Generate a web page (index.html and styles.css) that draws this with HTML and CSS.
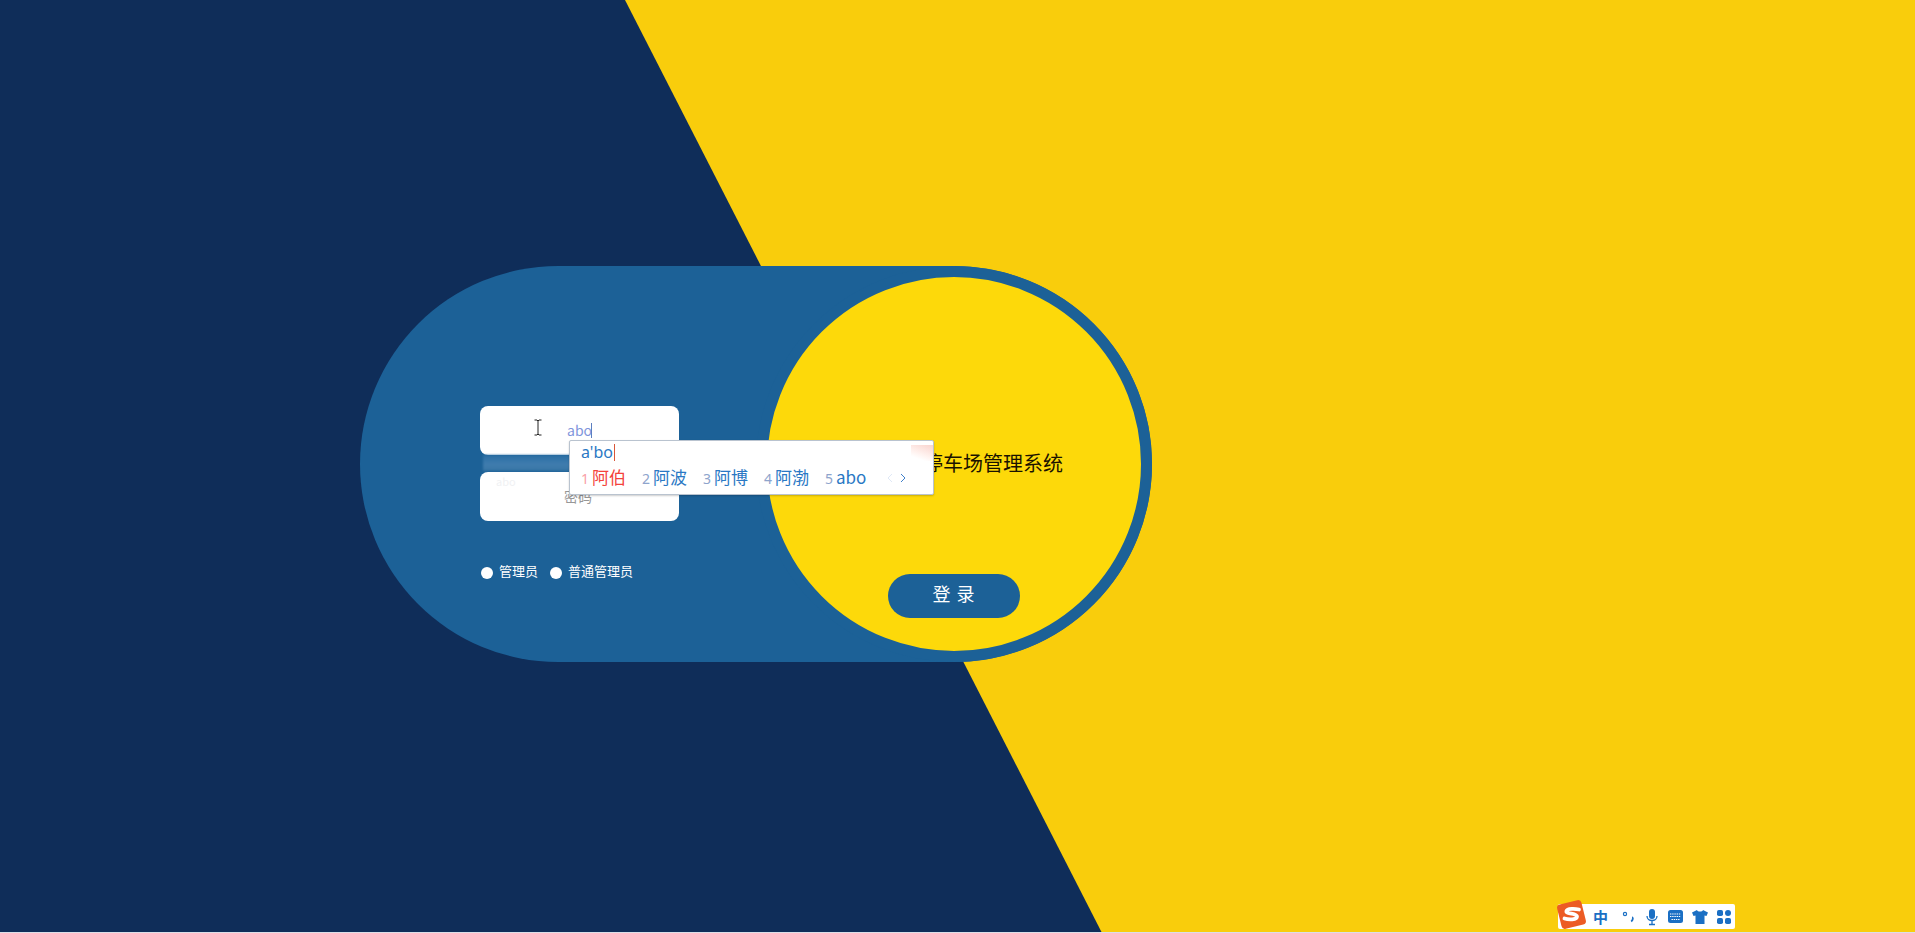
FILE: index.html
```html
<!DOCTYPE html>
<html lang="zh-CN">
<head>
<meta charset="utf-8">
<title>停车场管理系统</title>
<link rel="stylesheet" href="styles.css">
</head>
<body>
<div class="slant"></div>
<main class="page">
  <form class="card">
    <section class="fields">
      <div class="input"><span class="typed">abo<i class="input-caret"></i></span></div>
      <div class="smear"></div>
      <div class="input second"><span class="ghost">abo</span><span class="placeholder">密码</span></div>
      <div class="roles">
        <label class="role"><i class="radio"></i>管理员</label>
        <label class="role"><i class="radio"></i>普通管理员</label>
      </div>
    </section>
    <section class="circle">
      <h1 class="title">停车场管理系统</h1>
      <button class="login" type="button">登 录</button>
    </section>
  </form>
</main>

<svg class="cursor" width="10" height="17" viewBox="0 0 10 17" aria-hidden="true"><path d="M1.500 1h2.500l1 1 1-1h2.500M5 2v13M1.500 16h2.500l1-1 1 1h2.500" fill="none" stroke="#222" stroke-width="1"/></svg>

<div class="ime">
  <div class="ime-top">a'bo<i class="caret"></i></div>
  <div class="ime-list">
    <span class="cand first"><b>1</b>阿伯</span>
    <span class="cand"><b>2</b>阿波</span>
    <span class="cand"><b>3</b>阿博</span>
    <span class="cand"><b>4</b>阿渤</span>
    <span class="cand"><b>5</b>abo</span>
    <svg class="pager" width="22" height="12" viewBox="0 0 22 12" aria-hidden="true"><path d="M6 2 2 6l4 4" fill="none" stroke="#dfe8f6" stroke-width="1"/><path d="M15 2l4 4-4 4" fill="none" stroke="#3f7fca" stroke-width="1"/></svg>
  </div>
  <div class="ime-glare"></div>
</div>

<div class="toolbar">
  <svg class="logo" width="31" height="31" viewBox="0 0 31 31" aria-hidden="true">
    <rect x="3" y="3" width="25" height="25" rx="3.500" transform="rotate(-14 15.500 15.500)" fill="#ec5b24"/>
    <path d="M23 10.500c-4-1-11.500-1.300-12.500 1.500-1 3.200 10.500 2.200 10.500 5.500 0 3.500-8.500 3.300-12.500 2" fill="none" stroke="#fff" stroke-width="3.800" stroke-linecap="round"/>
  </svg>
  <span class="zh">中</span>
  <svg width="14" height="14" viewBox="0 0 14 14" aria-hidden="true"><circle cx="3" cy="4" r="1.600" fill="none" stroke="#1a6fc4" stroke-width="1.200"/><path d="M10 7.500c1.200 0 1.200 2.500-.8 4" fill="none" stroke="#1a6fc4" stroke-width="1.800"/></svg>
  <svg width="14" height="18" viewBox="0 0 14 18" aria-hidden="true"><rect x="4" y="1" width="6" height="10" rx="3" fill="#1a6fc4"/><path d="M2 8c0 6 10 6 10 0M7 13v3M4 16.500h6" fill="none" stroke="#1a6fc4" stroke-width="1.300"/></svg>
  <svg width="15" height="13" viewBox="0 0 15 13" aria-hidden="true"><rect width="15" height="13" rx="2.500" fill="#1a6fc4"/><path d="M2 4h11M2 6.500h11M3.500 9.500h8" stroke="#fff" stroke-width="1.100" stroke-dasharray="1.400 .8"/></svg>
  <svg width="16" height="14" viewBox="0 0 16 14" aria-hidden="true"><path d="M5 0 0 2.500l1.500 3.500L3.500 5.500V14h9V5.500l2 .5L16 2.500 11 0C10.500 2 5.500 2 5 0z" fill="#1a6fc4"/></svg>
  <svg width="14" height="14" viewBox="0 0 14 14" aria-hidden="true"><rect x="0" y="0" width="6" height="6" rx="1.800" fill="#1a6fc4"/><rect x="8" y="0" width="6" height="6" rx="3" fill="#1a6fc4"/><rect x="0" y="8" width="6" height="6" rx="1.800" fill="#1a6fc4"/><rect x="8" y="8" width="6" height="6" rx="1.800" fill="#1a6fc4"/></svg>
</div>
</body>
</html>
```
FILE: styles.css
```css
* { box-sizing: border-box; }
html, body { margin: 0; height: 100%; overflow: hidden; }
body {
  background: #0f2d59;
  font-family: "Noto Sans CJK SC", "Noto Sans", sans-serif;
  color: #111;
}
body::after {
  content: "";
  position: absolute;
  left: 0;
  right: 0;
  bottom: 0;
  height: 1px;
  background: #dcdfe8;
}
.slant {
  position: absolute;
  inset: 0;
  background: #f9cd0c;
  clip-path: polygon(625px 0, 100% 0, 100% 100%, 1102px 100%);
}
.page {
  position: relative;
  padding: 266px 0 0 360px;
}
.card {
  display: flex;
  justify-content: space-between;
  width: 792px;
  height: 396px;
  border-radius: 198px;
  background: #1c6197;
}
.fields {
  display: flex;
  flex-direction: column;
  width: 199px;
  margin: 140px 0 0 120px;
}
.input {
  position: relative;
  display: block;
  height: 49px;
  border-radius: 8px;
  background: #fff;
  font-size: 14px;
}
.typed {
  display: flex;
  align-items: center;
  padding-left: 87px;
  color: #7f96dc;
  font-size: 14px;
  line-height: 48px;
}
.input-caret {
  display: block;
  width: 1px;
  height: 15px;
  margin-left: -1px;
  background: #5d7fc0;
}
.smear {
  width: 88px;
  height: 17px;
  margin-left: 3px;
  background: linear-gradient(180deg, #2a6ea4 0, #3f7cae 55%, #3b78a8 85%, #1c6197 100%);
  filter: blur(1px);
}
.second { display: flex; flex-direction: column; }
.ghost {
  height: 14px;
  padding: 2px 0 0 16px;
  color: #f0f1f3;
  font-size: 11px;
  line-height: 14px;
}
.placeholder {
  padding-left: 84px;
  color: #979797;
  font-size: 14px;
  line-height: 20px;
}
.roles {
  display: flex;
  gap: 11px;
  margin-top: 40px;
  color: #fff;
  font-size: 13px;
  line-height: 20px;
}
.role { display: flex; align-items: center; gap: 6px; }
.radio {
  display: block;
  width: 12px;
  height: 12px;
  margin: 3px 0 0 1px;
  border-radius: 50%;
  background: #fff;
}
.circle {
  display: flex;
  flex-direction: column;
  align-items: center;
  width: 396px;
  height: 396px;
  border: 11px solid #1c6197;
  border-radius: 50%;
  background: #fdd90a;
}
.title {
  align-self: flex-end;
  margin: 172px 78px 0 0;
  font-size: 20px;
  font-weight: 400;
  line-height: 28px;
  color: #1a1200;
}
.login {
  width: 132px;
  height: 44px;
  margin-top: 97px;
  padding: 0 0 7px;
  border: 0;
  border-radius: 22px;
  background: #1c6197;
  color: #fff;
  font: 400 18px/36px "Noto Sans CJK SC", sans-serif;
  letter-spacing: 1px;
}
.cursor { position: absolute; left: 533px; top: 419px; }
.ime {
  position: absolute;
  left: 569px;
  top: 440px;
  width: 365px;
  height: 55px;
  overflow: hidden;
  background: #fff;
  border: 1px solid #b9c3cf;
  border-radius: 2px;
  box-shadow: 0 1px 2px rgba(0,0,0,.2);
  color: #2a78c4;
}
.ime-top {
  display: flex;
  align-items: center;
  height: 22px;
  padding: 0 0 0 11px;
  font: 16px/20px "Noto Sans", sans-serif;
}
.caret { display: block; width: 1px; height: 17px; margin-left: 1px; background: #d8573a; }
.ime-list {
  display: flex;
  align-items: center;
  height: 28px;
  padding: 1px 0 0 11px;
  font-size: 17px;
  line-height: 26px;
}
.cand { width: 61px; white-space: nowrap; }
.cand b { margin-right: 3px; color: #8ea4cc; font-size: 14px; font-weight: 400; font-family: "Noto Sans", sans-serif; }
.first { color: #f4433c; }
.first b { color: #f9a0a8; }
.pager { margin-left: 0; }
.ime-glare {
  position: absolute;
  right: 0;
  top: 4px;
  width: 22px;
  height: 16px;
  background: linear-gradient(200deg, #f9d3cd, #fff2ef 55%, #fff 80%);
}
.toolbar {
  position: absolute;
  left: 1558px;
  top: 904px;
  display: flex;
  align-items: center;
  gap: 9px;
  width: 177px;
  height: 25px;
  padding-left: 35px;
  border-radius: 2px;
  background: #fff;
  color: #1a6fc4;
}
.logo { position: absolute; left: -2px; top: -5px; }
.zh { font-size: 15px; font-weight: 700; line-height: 25px; margin-right: 5px; }
```
